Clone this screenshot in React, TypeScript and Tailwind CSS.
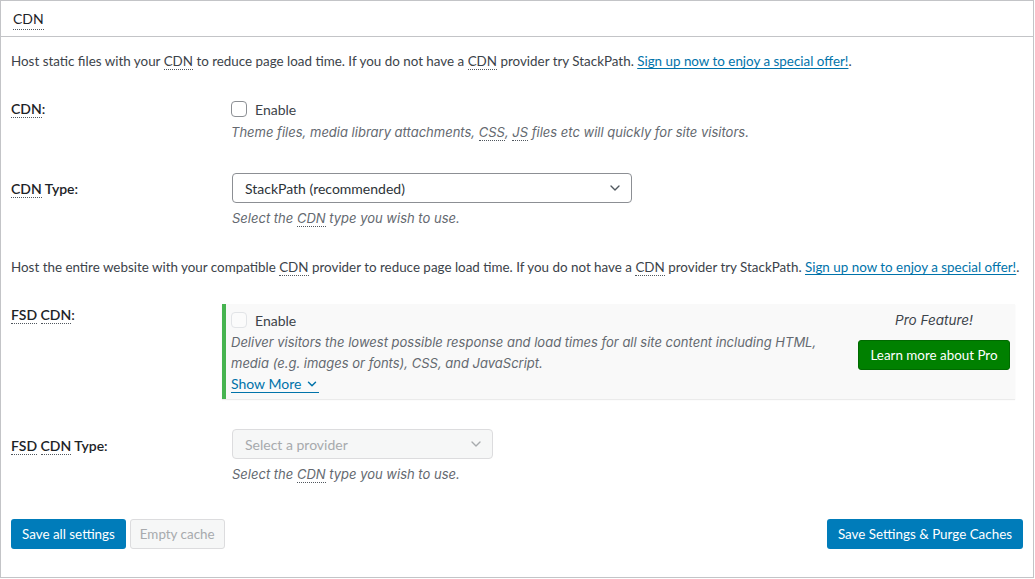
import React from "react";
import { ChevronDown } from "lucide-react";

const Abbr = ({ children }: { children: React.ReactNode }) => (
  <abbr className="border-b border-dotted border-[#50575e]" style={{ textDecoration: "none" }}>
    {children}
  </abbr>
);

const Link = ({ children }: { children: React.ReactNode }) => (
  <a className="text-[#0073aa] underline underline-offset-2 decoration-1">{children}</a>
);

const IT = "'Inter', 'Noto Sans', sans-serif";

export default function App() {
  return (
    <div
      className="w-[1035px] h-[579px] bg-white text-[#3c434a] text-[13.4px]"
      style={{ fontFamily: "Lato, 'Noto Sans', sans-serif" }}
    >
      <div className="w-[1034px] h-[578px] border border-[#c3c4c7] flex flex-col">
        <div className="h-[36px] border-b border-[#c3c4c7] flex items-center pl-[12px] text-[14px] text-[#1d2327] shrink-0">
          <Abbr>CDN</Abbr>
        </div>
        <div className="pl-[10px] flex flex-col">
          <p className="mt-[14px] leading-[20px]">
            Host static files with your <Abbr>CDN</Abbr> to reduce page load time. If you do not have a{" "}
            <Abbr>CDN</Abbr> provider try StackPath. <Link>Sign up now to enjoy a special offer!</Link>.
          </p>

          {/* CDN row */}
          <div className="flex mt-[27px]">
            <div className="w-[220px] shrink-0 leading-[22px] text-[14px] font-semibold text-[#1d2327]">
              <Abbr>CDN</Abbr>:
            </div>
            <div className="flex flex-col">
              <label className="flex items-center h-[22px] text-[14px]">
                <span className="w-[16px] h-[16px] rounded-[4px] border border-[#8c8f94] bg-white mr-[8px]" />
                Enable
              </label>
              <p className="italic text-[13px] text-[#646970] leading-[20px] mt-[2px]" style={{ fontFamily: IT }}>
                Theme files, media library attachments, <Abbr>CSS</Abbr>, <Abbr>JS</Abbr> files etc will quickly for
                site visitors.
              </p>
            </div>
          </div>

          {/* CDN Type row */}
          <div className="flex mt-[31px]">
            <div className="w-[221px] shrink-0 leading-[22px] text-[14px] font-semibold text-[#1d2327] mt-[5px]">
              <Abbr>CDN</Abbr> Type:
            </div>
            <div className="flex flex-col">
              <div className="w-[400px] h-[30px] border border-[#8c8f94] rounded-[4px] flex items-center justify-between pl-[12px] pr-[8px] text-[14px] text-[#2c3338]">
                <span>StackPath (recommended)</span>
                <ChevronDown size={16} strokeWidth={2} className="text-[#50575e]" />
              </div>
              <p className="italic text-[13px] text-[#646970] leading-[20px] mt-[5px]" style={{ fontFamily: IT }}>
                Select the <Abbr>CDN</Abbr> type you wish to use.
              </p>
            </div>
          </div>

          <p className="mt-[29px] leading-[20px]">
            Host the entire website with your compatible <Abbr>CDN</Abbr> provider to reduce page load time. If you do
            not have a <Abbr>CDN</Abbr> provider try StackPath. <Link>Sign up now to enjoy a special offer!</Link>.
          </p>

          {/* FSD CDN row */}
          <div className="flex mt-[27px]">
            <div className="w-[211px] shrink-0 leading-[22px] text-[14px] font-semibold text-[#1d2327]">
              <Abbr>FSD</Abbr> <Abbr>CDN</Abbr>:
            </div>
            <div className="w-[793px] h-[95px] bg-[#f9f9f9] border-l-4 border-[#46b450] shadow-[0_1px_1px_rgba(0,0,0,0.08)] flex pl-[5px] pt-[5px]">
              <div className="flex-1 flex flex-col">
                <label className="flex items-center h-[22px] text-[14px]">
                  <span className="w-[16px] h-[16px] rounded-[4px] border border-[#e2e4e7] bg-[#fbfbfb] mr-[8px]" />
                  Enable
                </label>
                <p
                  className="italic text-[13px] text-[#646970] leading-[21px] mt-[1px] w-[605px]"
                  style={{ fontFamily: IT }}
                >
                  Deliver visitors the lowest possible response and load times for all site content including HTML,
                  media (e.g. images or fonts), CSS, and JavaScript.
                </p>
                <a className="text-[#0073aa] border-b border-[#0073aa] text-[14px] leading-[17px] mt-[1px] flex items-center w-fit">
                  Show More <ChevronDown size={14} strokeWidth={2.5} className="ml-[4px]" />
                </a>
              </div>
              <div className="w-[160px] mr-[1px] flex flex-col items-center">
                <div className="italic text-[13.5px] leading-[22px] text-[#3c434a]" style={{ fontFamily: IT }}>
                  Pro Feature!
                </div>
                <button className="mt-[9px] w-[152px] h-[30px] rounded-[3px] bg-[#008000] border border-[#006a00] text-white text-[13.4px]">
                  Learn more about Pro
                </button>
              </div>
            </div>
          </div>

          {/* FSD CDN Type row */}
          <div className="flex mt-[30px]">
            <div className="w-[221px] shrink-0 leading-[22px] text-[14px] font-semibold text-[#1d2327] mt-[6px]">
              <Abbr>FSD</Abbr> <Abbr>CDN</Abbr> Type:
            </div>
            <div className="flex flex-col">
              <div className="w-[261px] h-[30px] border border-[#dcdcde] bg-[#f6f7f7] rounded-[4px] flex items-center justify-between pl-[12px] pr-[8px] text-[14px] text-[#a7aaad]">
                <span>Select a provider</span>
                <ChevronDown size={16} strokeWidth={2} className="text-[#a7aaad]" />
              </div>
              <p className="italic text-[13px] text-[#646970] leading-[20px] mt-[5px]" style={{ fontFamily: IT }}>
                Select the <Abbr>CDN</Abbr> type you wish to use.
              </p>
            </div>
          </div>

          <div className="flex mt-[35px] pr-[10px]">
            <button className="h-[30px] px-[11px] rounded-[3px] bg-[#007cba] text-white text-[13.4px]">
              Save all settings
            </button>
            <button className="ml-[4px] h-[30px] px-[9px] rounded-[3px] bg-[#f6f7f7] border border-[#dcdcde] text-[#a7aaad] text-[13.4px]">
              Empty cache
            </button>
            <button className="ml-auto h-[30px] px-[11px] rounded-[3px] bg-[#007cba] text-white text-[13.4px]">
              Save Settings &amp; Purge Caches
            </button>
          </div>
        </div>
      </div>
    </div>
  );
}
